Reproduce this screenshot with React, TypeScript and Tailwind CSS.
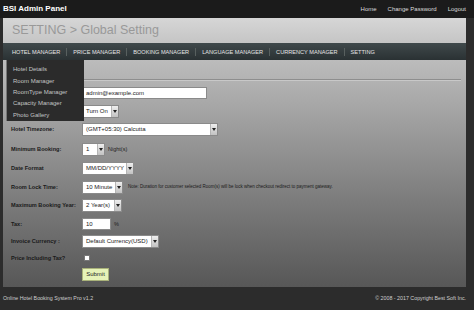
const font = { fontFamily: '"Liberation Sans", Arial, sans-serif' };

const Arrow = () => (
  <span className="ml-auto flex h-[11px] w-[7px] shrink-0 items-center justify-center border-l border-[#b5b5b5] bg-gradient-to-b from-[#eeeeee] to-[#c2c2c2]">
    <svg width="4" height="3" viewBox="0 0 4 3">
      <path d="M0 0h4L2 3z" fill="#222" />
    </svg>
  </span>
);

const Select = ({ value, w }: { value: string; w: string }) => (
  <div className={`flex h-[13px] items-center border border-[#8a8a8a] bg-white pl-[3px] text-[6px] text-[#222] ${w}`}>
    <span className="mr-[2px] whitespace-nowrap">{value}</span>
    <Arrow />
  </div>
);

const Row = ({ label, h, children }: { label: string; h: string; children?: React.ReactNode }) => (
  <div className={`flex items-center ${h}`}>
    <div className="w-[79px] pl-[8px] text-[5.6px] font-bold text-[#1a1a1a] whitespace-nowrap">{label}</div>
    <div className="flex items-center">{children}</div>
  </div>
);

const navItems = ["HOTEL MANAGER", "PRICE MANAGER", "BOOKING MANAGER", "LANGUAGE MANAGER", "CURRENCY MANAGER", "SETTING"];
const hotelMenu = ["Hotel Details", "Room Manager", "RoomType Manager", "Capacity Manager", "Photo Gallery"];

export default function App() {
  return (
    <div className="flex h-[310px] w-[474px] flex-col overflow-hidden bg-[#2c2c2c]" style={font}>
      <div className="flex h-[18px] items-center justify-between bg-[#1b1b1b] pl-[3px] pr-[8px]">
        <span className="text-[8px] font-bold text-white">BSI Admin Panel</span>
        <div className="flex gap-[11px] text-[6px] text-[#dcdcdc]">
          <span>Home</span>
          <span>Change Password</span>
          <span>Logout</span>
        </div>
      </div>

      <div className="flex flex-col pl-[3px] pr-[8px]">
        <div className="flex h-[25px] items-center bg-gradient-to-b from-[#d6d6d6] to-[#c5c5c5] pl-[9px] text-[12.5px] text-[#999]">
          SETTING &gt; Global Setting
        </div>

        <div className="flex h-[17px] items-center bg-gradient-to-b from-[#404a4c] to-[#2a3133] pl-[3px]">
          {navItems.map((item, i) => (
            <span
              key={item}
              className={`px-[6px] text-[5.6px] leading-[8px] text-[#e4e4e4] ${i < navItems.length - 1 ? "border-r border-[#58605f]" : ""}`}
            >
              {item}
            </span>
          ))}
        </div>

        <div className="relative flex h-[227px] flex-col bg-gradient-to-b from-[#bcbcbc] to-[#575757]">
          <div className="mx-[5px] mt-[19px] h-[2px] border-t border-[#8e8e8e] border-b-[#c8c8c8] border-b" />
          <div className="mt-[3px] flex flex-col">
            {/* first two labels sit under the open menu */}
            <Row label="" h="h-[18px]">
              <div className="flex h-[12px] w-[125px] items-center border border-[#8a8a8a] bg-white pl-[3px] text-[6px] text-[#222]">
                admin@example.com
              </div>
            </Row>
            <Row label="" h="h-[18px]">
              <Select value="Turn On" w="w-[37px]" />
            </Row>
            <Row label="Hotel Timezone:" h="h-[19px]">
              <Select value="(GMT+05:30) Calcutta" w="w-[136px]" />
            </Row>
            <Row label="Minimum Booking:" h="h-[20px]">
              <Select value="1" w="w-[23px]" />
              <span className="ml-[3px] text-[5.5px] text-[#222]">Night(s)</span>
            </Row>
            <Row label="Date Format" h="h-[19px]">
              <Select value="MM/DD/YYYY" w="w-[51px]" />
            </Row>
            <Row label="Room Lock Time:" h="h-[18px]">
              <Select value="10 Minute" w="w-[41px]" />
              <span className="ml-[5px] whitespace-nowrap text-[4.5px] text-[#1a1a1a]">
                Note: Duration for customer selected Room(s) will be lock when checkout redirect to payment gateway.
              </span>
            </Row>
            <Row label="Maximum Booking Year:" h="h-[19px]">
              <Select value="2 Year(s)" w="w-[40px]" />
            </Row>
            <Row label="Tax:" h="h-[18px]">
              <div className="flex h-[12px] w-[29px] items-center border border-[#8a8a8a] bg-white pl-[3px] text-[6px] text-[#222]">
                10
              </div>
              <span className="ml-[3px] text-[5.5px] text-[#222]">%</span>
            </Row>
            <Row label="Invoice Currency :" h="h-[17px]">
              <Select value="Default Currency(USD)" w="w-[77px]" />
            </Row>
            <Row label="Price Including Tax?" h="h-[16px]">
              <div className="ml-[2px] h-[6px] w-[6px] border border-[#777] bg-white" />
            </Row>
            <Row label="" h="h-[16px]">
              <div className="flex h-[13px] w-[27px] items-center justify-center border border-[#a9b27a] bg-[#e6f3b8] text-[6px] text-[#222]">
                Submit
              </div>
            </Row>
          </div>

          <div className="absolute left-[3px] top-0 flex h-[61px] w-[78px] flex-col border-l border-[#777] bg-[#2b2b2b] pl-[6px] pt-[4px]">
            {hotelMenu.map((m) => (
              <span key={m} className="flex h-[11.6px] items-center text-[6px] text-[#c4c4c4]">
                {m}
              </span>
            ))}
          </div>
        </div>
      </div>

      <div className="flex flex-1 items-center justify-between pl-[3px] pr-[8px] text-[5.3px] text-[#cfcfcf]">
        <span>Online Hotel Booking System Pro v1.2</span>
        <span>© 2008 - 2017 Copyright Best Soft Inc.</span>
      </div>
    </div>
  );
}
